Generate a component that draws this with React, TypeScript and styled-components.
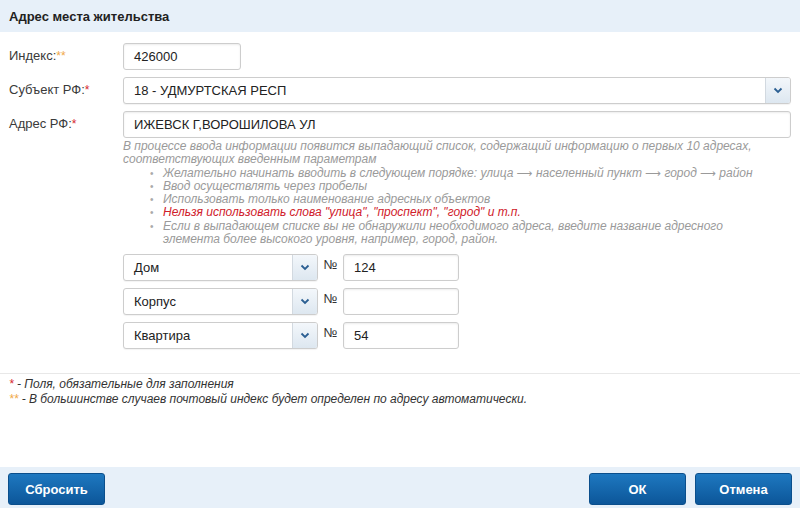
import React from 'react';
import styled, { createGlobalStyle } from 'styled-components';

const GlobalStyle = createGlobalStyle`
  html, body {
    margin: 0;
    padding: 0;
    background: #ffffff;
  }
  body {
    font-family: "Liberation Sans", Arial, sans-serif;
    color: #333;
  }
`;

const Dialog = styled.div`
  width: 800px;
  height: 508px;
  display: flex;
  flex-direction: column;
  background: #fff;
`;

const Header = styled.div`
  height: 32px;
  flex-shrink: 0;
  display: flex;
  align-items: center;
  padding: 0 9px;
  background: #e7f0f9;
  font-size: 13px;
  font-weight: bold;
  color: #222;
`;

const Body = styled.div`
  flex: 1;
  display: flex;
  flex-direction: column;
  padding-top: 11px;
`;

const FormRow = styled.div`
  display: grid;
  grid-template-columns: 114px 1fr;
  padding: 0 9px;
  margin-bottom: 7px;
`;

const Label = styled.div`
  font-size: 13px;
  color: #3a3a3a;
  padding-top: 5px;
`;

const Mark = styled.span<{ $double?: boolean }>`
  color: ${({ $double }) => ($double ? '#f0a848' : '#d6262e')};
  font-size: 12px;
`;

const Field = styled.div`
  display: flex;
  flex-direction: column;
`;

const TextBox = styled.div<{ $width?: number }>`
  box-sizing: border-box;
  height: 27px;
  width: ${({ $width }) => ($width ? `${$width}px` : '100%')};
  border: 1px solid #cdcdcd;
  border-radius: 3px;
  box-shadow: inset 0 1px 2px rgba(0, 0, 0, 0.08);
  display: flex;
  align-items: center;
  padding: 0 10px;
  font-size: 13px;
  color: #222;
  background: #fff;
`;

const Select = styled.div<{ $width?: number }>`
  box-sizing: border-box;
  height: 27px;
  width: ${({ $width }) => ($width ? `${$width}px` : '100%')};
  border: 1px solid #cdcdcd;
  border-radius: 3px;
  display: flex;
  align-items: stretch;
  background: #fff;
  box-shadow: 0 1px 1px rgba(0, 0, 0, 0.05);
`;

const SelectValue = styled.div`
  flex: 1;
  display: flex;
  align-items: center;
  padding: 0 10px;
  font-size: 13px;
  color: #222;
`;

const SelectButton = styled.div`
  width: 24px;
  border-left: 1px solid #d2d9e0;
  background: linear-gradient(#f3f7fb, #dde7f0);
  display: flex;
  align-items: center;
  justify-content: center;
  border-radius: 0 2px 2px 0;
`;

const Hint = styled.div`
  margin-top: 2px;
  font-size: 12px;
  line-height: 13.3px;
  font-style: italic;
  color: #9a9a9a;
`;

const HintList = styled.ul`
  margin: 0;
  padding: 0 22px 0 40px;
  list-style: none;
`;

const HintItem = styled.li<{ $warn?: boolean }>`
  position: relative;
  color: ${({ $warn }) => ($warn ? '#d0202a' : '#9a9a9a')};
  &::before {
    content: '•';
    position: absolute;
    left: -13px;
    color: #aaa;
    font-style: normal;
    font-size: 10px;
  }
`;

const Arrow = styled.span`
  font-family: "DejaVu Sans", sans-serif;
  font-style: normal;
  font-size: 11px;
`;

const Parts = styled.div`
  display: flex;
  flex-direction: column;
  gap: 7px;
  margin-top: 8px;
`;

const PartRow = styled.div`
  display: flex;
  align-items: center;
`;

const NumSign = styled.span`
  width: 25px;
  text-align: center;
  font-size: 13px;
  color: #333;
  align-self: flex-start;
  padding-top: 3px;
`;

const Separator = styled.div`
  margin-top: 17px;
  border-top: 1px solid #e8e8e8;
`;

const Notes = styled.div`
  padding: 3px 9px 0;
  font-size: 12px;
  line-height: 15px;
  font-style: italic;
  color: #333;
`;

const Footer = styled.div`
  height: 41px;
  flex-shrink: 0;
  background: #e7f0f9;
  display: flex;
  align-items: flex-start;
  justify-content: space-between;
  padding: 6px 8px 0;
  box-sizing: border-box;
`;

const ButtonGroup = styled.div`
  display: flex;
  gap: 9px;
`;

const Button = styled.button`
  width: 97px;
  height: 32px;
  border: 1px solid #0b4f8c;
  border-radius: 3px;
  background: linear-gradient(#1e78c0, #0c5699);
  color: #fff;
  font-family: "Liberation Sans", Arial, sans-serif;
  font-size: 13px;
  font-weight: bold;
  cursor: pointer;
`;

const Chevron = () => (
  <svg width="10" height="7" viewBox="0 0 10 7">
    <path d="M1.5 1.5 L5 5 L8.5 1.5" fill="none" stroke="#2b5f92" strokeWidth="1.8" />
  </svg>
);

const parts = [
  { kind: 'Дом', value: '124' },
  { kind: 'Корпус', value: '' },
  { kind: 'Квартира', value: '54' },
];

export default function App() {
  return (
    <>
      <GlobalStyle />
      <Dialog>
        <Header>Адрес места жительства</Header>
        <Body>
          <FormRow>
            <Label>
              Индекс:<Mark $double>**</Mark>
            </Label>
            <TextBox $width={118}>426000</TextBox>
          </FormRow>
          <FormRow>
            <Label>
              Субъект РФ:<Mark>*</Mark>
            </Label>
            <Select>
              <SelectValue>18 - УДМУРТСКАЯ РЕСП</SelectValue>
              <SelectButton>
                <Chevron />
              </SelectButton>
            </Select>
          </FormRow>
          <FormRow>
            <Label>
              Адрес РФ:<Mark>*</Mark>
            </Label>
            <Field>
              <TextBox>ИЖЕВСК Г,ВОРОШИЛОВА УЛ</TextBox>
              <Hint>
                В процессе ввода информации появится выпадающий список, содержащий информацию о первых 10 адресах,
                соответствующих введенным параметрам
                <HintList>
                  <HintItem>
                    Желательно начинать вводить в следующем порядке: улица <Arrow>⟶</Arrow> населенный пункт{' '}
                    <Arrow>⟶</Arrow> город <Arrow>⟶</Arrow> район
                  </HintItem>
                  <HintItem>Ввод осуществлять через пробелы</HintItem>
                  <HintItem>Использовать только наименование адресных объектов</HintItem>
                  <HintItem $warn>Нельзя использовать слова "улица", "проспект", "город" и т.п.</HintItem>
                  <HintItem>
                    Если в выпадающем списке вы не обнаружили необходимого адреса, введите название адресного
                    элемента более высокого уровня, например, город, район.
                  </HintItem>
                </HintList>
              </Hint>
              <Parts>
                {parts.map((p) => (
                  <PartRow key={p.kind}>
                    <Select $width={195}>
                      <SelectValue>{p.kind}</SelectValue>
                      <SelectButton>
                        <Chevron />
                      </SelectButton>
                    </Select>
                    <NumSign>№</NumSign>
                    <TextBox $width={116}>{p.value}</TextBox>
                  </PartRow>
                ))}
              </Parts>
            </Field>
          </FormRow>
          <Separator />
          <Notes>
            <div>
              <Mark>*</Mark> - Поля, обязательные для заполнения
            </div>
            <div>
              <Mark $double>**</Mark> - В большинстве случаев почтовый индекс будет определен по адресу автоматически.
            </div>
          </Notes>
        </Body>
        <Footer>
          <Button>Сбросить</Button>
          <ButtonGroup>
            <Button>ОК</Button>
            <Button>Отмена</Button>
          </ButtonGroup>
        </Footer>
      </Dialog>
    </>
  );
}
